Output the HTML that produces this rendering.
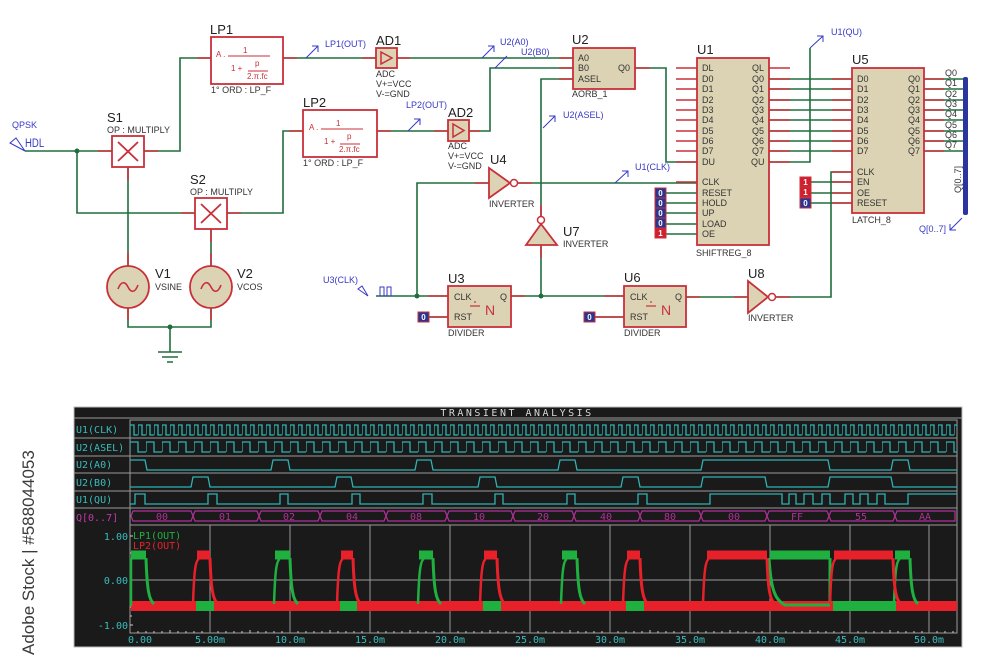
<!DOCTYPE html>
<html><head><meta charset="utf-8"><style>
html,body{margin:0;padding:0;background:#fff;}
svg{display:block;}
.w{stroke:#1f6e3c;stroke-width:1.6;fill:none;}
.r{stroke:#c8303a;stroke-width:1.6;fill:none;}
.bx{fill:#dcd3b4;stroke:#c8303a;stroke-width:1.8;}
.t{font-family:"Liberation Sans",sans-serif;font-size:9px;fill:#333;}
.tl{font-family:"Liberation Sans",sans-serif;font-size:13px;fill:#222;}
.tb{font-family:"Liberation Sans",sans-serif;font-size:9px;fill:#3838c8;}
.tr{font-family:"Liberation Sans",sans-serif;fill:#c8303a;}
.m{font-family:"DejaVu Sans Mono","Liberation Mono",monospace;font-size:10px;}
.cy{fill:#3bbcbc;}
.cyl{stroke:#2fb2b2;stroke-width:1.3;fill:none;}
.gr{stroke:#9a9a9a;stroke-width:1;}
.pg path{stroke:#1fb040;fill:none;}
.pr path{stroke:#e8202a;fill:none;}
</style></head><body>
<svg width="1000" height="671" viewBox="0 0 1000 671" xmlns="http://www.w3.org/2000/svg">
<rect width="1000" height="671" fill="#fff"/>
<text transform="translate(34,655) rotate(-90)" font-family="Liberation Sans,sans-serif" font-size="17" fill="#3a3a3a">Adobe Stock | #588044053</text>

<g class="w">
<path d="M25 151 H112"/>
<path d="M77 151 V213 H195"/>
<path d="M144 151 H180 V58 H211"/>
<path d="M283 58 H376"/>
<path d="M128 167 V266"/>
<path d="M227 213 H283 V131 H303"/>
<path d="M377 131 H448"/>
<path d="M397 58 H573"/>
<path d="M469 131 H490 V68 H573"/>
<path d="M211 229 V266"/>
<path d="M128 308 V327 H211 V308"/>
<path d="M170 327 V352"/>
<path d="M376 296 H448"/>
<path d="M417 296 V183 H489"/>
<path d="M518 183 H697"/>
<path d="M511 296 H624"/>
<path d="M541 296 V245"/>
<path d="M541 216 V79 H573"/>
<path d="M635 68 H666 V162 H697"/>
<path d="M769 79 H852 M769 89 H852 M769 100 H852 M769 110 H852 M769 120 H852 M769 131 H852 M769 141 H852 M769 151 H852"/>
<path d="M769 162 H810 V48"/>
<path d="M924 79 H965 M924 89 H965 M924 100 H965 M924 110 H965 M924 120 H965 M924 131 H965 M924 141 H965 M924 151 H965"/>
<path d="M686 297 H748"/>
<path d="M776 297 H831 V172 H852"/>
<path d="M811 182 H852 M811 193 H852 M811 203 H852"/>
<path d="M595 317 H624"/>
<path d="M429 317 H448"/>
<path d="M666 193 H697 M666 203 H697 M666 213 H697 M666 224 H697 M666 234 H697"/>
</g>
<g class="r">
<path d="M98 151 H112 M144 151 H158 M197 58 H211 M283 58 H297 M362 58 H376 M397 58 H410"/>
<path d="M181 213 H195 M227 213 H241 M289 131 H303 M377 131 H391 M434 131 H448 M469 131 H480"/>
<path d="M128 167 V180 M128 253 V266 M211 229 V242 M211 253 V266 M128 308 V320 M211 308 V320"/>
<path d="M559 58 H573 M559 68 H573 M559 79 H573 M635 68 H650"/>
<path d="M676 68 H697 M676 79 H697 M676 89 H697 M676 100 H697 M676 110 H697 M676 120 H697 M676 131 H697 M676 141 H697 M676 151 H697 M676 162 H697 M676 182 H697"/>
<path d="M769 68 H790 M769 79 H790 M769 89 H790 M769 100 H790 M769 110 H790 M769 120 H790 M769 131 H790 M769 141 H790 M769 151 H790 M769 162 H790"/>
<path d="M832 79 H852 M832 89 H852 M832 100 H852 M832 110 H852 M832 120 H852 M832 131 H852 M832 141 H852 M832 151 H852 M832 172 H852 M832 182 H852 M832 193 H852 M832 203 H852"/>
<path d="M924 79 H944 M924 89 H944 M924 100 H944 M924 110 H944 M924 120 H944 M924 131 H944 M924 141 H944 M924 151 H944"/>
<path d="M475 183 H489 M518 183 H532 M541 245 V258 M541 216 V205"/>
<path d="M428 296 H448 M511 296 H525 M604 296 H624 M686 297 H700 M734 297 H748 M776 297 H790"/>
<path d="M429 317 H448 M595 317 H624"/>
</g>
<g fill="#1f6e3c"><circle cx="77" cy="151" r="2.5"/><circle cx="170" cy="327" r="2.5"/><circle cx="417" cy="296" r="2.5"/><circle cx="541" cy="296" r="2.5"/></g>
<g stroke="#1f6e3c" stroke-width="1.6"><path d="M158 352 H182 M162 357 H178 M167 362 H173"/></g>

<text class="tb" x="12" y="128">QPSK</text>
<path d="M10 143 L16 138 L25 151 Z" fill="none" stroke="#3838c8" stroke-width="1"/>
<text x="25" y="147" font-family="Liberation Sans,sans-serif" font-size="12" fill="#3838c8" transform="scale(0.8,1)" style="transform-origin:25px 147px">HDL</text>

<rect class="bx" x="112" y="136" width="32" height="31" style="fill:#fff"/>
<path d="M118 142 L138 161 M138 142 L118 161" stroke="#c8303a" stroke-width="1.8"/>
<text class="tl" x="107" y="122">S1</text><text class="t" x="107" y="133">OP : MULTIPLY</text>
<rect class="bx" x="195" y="198" width="32" height="31" style="fill:#fff"/>
<path d="M201 204 L221 223 M221 204 L201 223" stroke="#c8303a" stroke-width="1.8"/>
<text class="tl" x="190" y="184">S2</text><text class="t" x="190" y="195">OP : MULTIPLY</text>

<circle cx="128" cy="287" r="21" fill="#dcd3b4" stroke="#c8303a" stroke-width="1.8"/>
<path d="M118 289 C121 281 125 281 128 287 C131 293 135 293 138 285" stroke="#c8303a" stroke-width="1.6" fill="none"/>
<circle cx="211" cy="287" r="21" fill="#dcd3b4" stroke="#c8303a" stroke-width="1.8"/>
<path d="M201 289 C204 281 208 281 211 287 C214 293 218 293 221 285" stroke="#c8303a" stroke-width="1.6" fill="none"/>
<text class="tl" x="155" y="278">V1</text><text class="t" x="155" y="290">VSINE</text>
<text class="tl" x="237" y="278">V2</text><text class="t" x="237" y="290">VCOS</text>

<g>
<rect x="211" y="37" width="72" height="47" fill="#fff" stroke="#c8303a" stroke-width="1.8"/>
<text class="tr" x="216" y="57" font-size="8">A .</text>
<path d="M228 56 H270 M248 71 H268" stroke="#c8303a" stroke-width="1"/>
<text class="tr" x="243" y="53" font-size="8">1</text>
<text class="tr" x="231" y="71" font-size="8">1 +</text>
<text class="tr" x="255" y="66" font-size="8">p</text>
<text class="tr" x="247" y="79" font-size="8">2.π.fc</text>
<text class="tl" x="210" y="34">LP1</text>
<text class="t" x="211" y="93">1° ORD : LP_F</text>
</g>
<g>
<rect x="303" y="110" width="74" height="47" fill="#fff" stroke="#c8303a" stroke-width="1.8"/>
<text class="tr" x="309" y="130" font-size="8">A .</text>
<path d="M321 129 H363 M340 144 H360" stroke="#c8303a" stroke-width="1"/>
<text class="tr" x="336" y="126" font-size="8">1</text>
<text class="tr" x="324" y="144" font-size="8">1 +</text>
<text class="tr" x="347" y="139" font-size="8">p</text>
<text class="tr" x="339" y="152" font-size="8">2.π.fc</text>
<text class="tl" x="303" y="107">LP2</text>
<text class="t" x="303" y="166">1° ORD : LP_F</text>
</g>

<g stroke="#3838c8" stroke-width="1" fill="none">
<path d="M306 58 L318 46 M312 46 H318 V52"/>
<path d="M408 131 L420 119 M414 119 H420 V125"/>
<path d="M482 58 L494 46 M488 46 H494 V52"/>
<path d="M495 68 L507 56"/>
<path d="M543 128 L555 116 M549 116 H555 V122"/>
<path d="M615 183 L628 171 M622 171 H628 V177"/>
<path d="M810 48 L823 36 M817 36 H823 V42"/>
<path d="M950 230 L962 218 M950 224 V230 H956"/>
<path d="M368 296 L362 286 L358 289 Z"/>
</g>
<text class="tb" x="325" y="47">LP1(OUT)</text>
<text class="tb" x="406" y="108">LP2(OUT)</text>
<text class="tb" x="500" y="45">U2(A0)</text>
<text class="tb" x="521" y="55">U2(B0)</text>
<text class="tb" x="563" y="118">U2(ASEL)</text>
<text class="tb" x="635" y="170">U1(CLK)</text>
<text class="tb" x="831" y="35">U1(QU)</text>
<text class="tb" x="919" y="232">Q[0..7]</text>
<text class="tb" x="323" y="283">U3(CLK)</text>
<path d="M377 296 H380 V287 H384 V296 H387 V287 H391 V296 H394" stroke="#3838c8" stroke-width="1" fill="none"/>

<rect class="bx" x="376" y="48" width="21" height="20"/>
<path d="M381 52 L392 58 L381 64 Z" fill="none" stroke="#c8303a" stroke-width="1.5"/>
<text class="tl" x="376" y="45">AD1</text>
<text class="t" x="376" y="77">ADC</text><text class="t" x="376" y="87">V+=VCC</text><text class="t" x="376" y="97">V-=GND</text>
<rect class="bx" x="448" y="120" width="21" height="21"/>
<path d="M453 124 L464 130.5 L453 137 Z" fill="none" stroke="#c8303a" stroke-width="1.5"/>
<text class="tl" x="448" y="117">AD2</text>
<text class="t" x="448" y="149">ADC</text><text class="t" x="448" y="159">V+=VCC</text><text class="t" x="448" y="169">V-=GND</text>

<rect class="bx" x="573" y="48" width="62" height="41"/>
<text class="tl" x="572" y="44">U2</text>
<text class="t" x="578" y="61">A0</text><text class="t" x="578" y="71">B0</text><text class="t" x="578" y="82">ASEL</text><text class="t" x="618" y="71">Q0</text>
<text class="t" x="572" y="97">AORB_1</text>

<path d="M489 168 L510 183 L489 198 Z" class="bx"/><circle cx="514" cy="183" r="3.5" fill="#fff" stroke="#c8303a" stroke-width="1.5"/>
<text class="tl" x="490" y="164">U4</text><text class="t" x="489" y="207">INVERTER</text>
<path d="M526 245 L541 224 L557 245 Z" class="bx"/><circle cx="541" cy="220" r="3.5" fill="#fff" stroke="#c8303a" stroke-width="1.5"/>
<text class="tl" x="563" y="236">U7</text><text class="t" x="563" y="247">INVERTER</text>
<path d="M748 281 L768 297 L748 313 Z" class="bx"/><circle cx="772" cy="297" r="3.5" fill="#fff" stroke="#c8303a" stroke-width="1.5"/>
<text class="tl" x="748" y="278">U8</text><text class="t" x="748" y="321">INVERTER</text>

<rect class="bx" x="448" y="286" width="63" height="41"/>
<text class="tl" x="448" y="283">U3</text>
<text class="t" x="454" y="300">CLK</text><text class="t" x="454" y="320">RST</text><text class="t" x="500" y="300">Q</text>
<text class="tr" x="485" y="315" font-size="14">N</text><path d="M470 306 H480" stroke="#c8303a" stroke-width="1.2"/><circle cx="475" cy="302" r="0.9" fill="#c8303a"/>
<text class="t" x="448" y="336">DIVIDER</text>
<rect class="bx" x="624" y="286" width="62" height="41"/>
<text class="tl" x="624" y="282">U6</text>
<text class="t" x="630" y="300">CLK</text><text class="t" x="630" y="320">RST</text><text class="t" x="675" y="300">Q</text>
<text class="tr" x="661" y="315" font-size="14">N</text><path d="M646 306 H656" stroke="#c8303a" stroke-width="1.2"/><circle cx="651" cy="302" r="0.9" fill="#c8303a"/>
<text class="t" x="624" y="336">DIVIDER</text>

<rect class="bx" x="697" y="58" width="72" height="187"/>
<text class="tl" x="697" y="54">U1</text>
<g class="t">
<text x="702" y="71">DL</text><text x="702" y="82">D0</text><text x="702" y="92">D1</text><text x="702" y="103">D2</text><text x="702" y="113">D3</text><text x="702" y="123">D4</text><text x="702" y="134">D5</text><text x="702" y="144">D6</text><text x="702" y="154">D7</text><text x="702" y="165">DU</text>
<text x="702" y="185">CLK</text><text x="702" y="196">RESET</text><text x="702" y="206">HOLD</text><text x="702" y="216">UP</text><text x="702" y="227">LOAD</text><text x="702" y="237">OE</text>
<text x="752" y="71">QL</text><text x="752" y="82">Q0</text><text x="752" y="92">Q1</text><text x="752" y="103">Q2</text><text x="752" y="113">Q3</text><text x="752" y="123">Q4</text><text x="752" y="134">Q5</text><text x="752" y="144">Q6</text><text x="752" y="154">Q7</text><text x="751" y="165">QU</text>
<text x="696" y="256">SHIFTREG_8</text>
</g>
<rect class="bx" x="852" y="68" width="72" height="145"/>
<text class="tl" x="852" y="64">U5</text>
<g class="t">
<text x="857" y="82">D0</text><text x="857" y="92">D1</text><text x="857" y="103">D2</text><text x="857" y="113">D3</text><text x="857" y="123">D4</text><text x="857" y="134">D5</text><text x="857" y="144">D6</text><text x="857" y="154">D7</text>
<text x="857" y="175">CLK</text><text x="857" y="185">EN</text><text x="857" y="196">OE</text><text x="857" y="206">RESET</text>
<text x="908" y="82">Q0</text><text x="908" y="92">Q1</text><text x="908" y="103">Q2</text><text x="908" y="113">Q3</text><text x="908" y="123">Q4</text><text x="908" y="134">Q5</text><text x="908" y="144">Q6</text><text x="908" y="154">Q7</text>
<text x="852" y="223">LATCH_8</text>
<text x="945" y="76">Q0</text><text x="945" y="86">Q1</text><text x="945" y="97">Q2</text><text x="945" y="107">Q3</text><text x="945" y="117">Q4</text><text x="945" y="128">Q5</text><text x="945" y="138">Q6</text><text x="945" y="148">Q7</text>
<text transform="translate(961,193) rotate(-90)">Q[0..7]</text>
</g>
<rect x="963" y="77" width="5" height="138" rx="2" fill="#2a35a0"/>

<g font-family="Liberation Sans,sans-serif" font-size="8" font-weight="bold" fill="#fff" text-anchor="middle">
<rect x="655" y="188" width="11" height="10" fill="#2a3590" stroke="#c8303a"/><text x="660.5" y="196">0</text>
<rect x="655" y="198" width="11" height="10" fill="#2a3590" stroke="#c8303a"/><text x="660.5" y="206">0</text>
<rect x="655" y="208" width="11" height="10" fill="#2a3590" stroke="#c8303a"/><text x="660.5" y="216">0</text>
<rect x="655" y="218" width="11" height="10" fill="#2a3590" stroke="#c8303a"/><text x="660.5" y="226">0</text>
<rect x="655" y="228" width="11" height="10" fill="#d02030" stroke="#c8303a"/><text x="660.5" y="236">1</text>
<rect x="800" y="177" width="11" height="10" fill="#d02030" stroke="#c8303a"/><text x="805.5" y="185">1</text>
<rect x="800" y="187" width="11" height="10" fill="#d02030" stroke="#c8303a"/><text x="805.5" y="195">1</text>
<rect x="800" y="198" width="11" height="10" fill="#2a3590" stroke="#c8303a"/><text x="805.5" y="206">0</text>
<rect x="418" y="312" width="11" height="10" fill="#2a3590" stroke="#c8303a"/><text x="423.5" y="320">0</text>
<rect x="584" y="312" width="11" height="10" fill="#2a3590" stroke="#c8303a"/><text x="589.5" y="320">0</text>
</g>

<defs>
<pattern id="clk" x="130" y="0" width="8" height="671" patternUnits="userSpaceOnUse">
<path d="M0 435 V425 H4 V435 H8" stroke="#2fb2b2" stroke-width="1.3" fill="none"/>
</pattern>
<pattern id="asel" x="130" y="0" width="16" height="671" patternUnits="userSpaceOnUse">
<path d="M0 452 V442 H8 V452 H16" stroke="#2fb2b2" stroke-width="1.3" fill="none"/>
</pattern>
</defs>
<rect x="74" y="407" width="888" height="240" fill="#1a1a1a" stroke="#bbb" stroke-width="1"/>
<line x1="74" y1="418" x2="962" y2="418" class="gr"/>
<text x="517" y="416" text-anchor="middle" class="m" fill="#d8d8d8" letter-spacing="2.5" font-size="10">TRANSIENT ANALYSIS</text>
<rect x="130" y="420" width="827" height="213" fill="none" stroke="#9a9a9a"/>
<g class="gr">
<line x1="74" y1="438" x2="957" y2="438"/><line x1="74" y1="456" x2="957" y2="456"/><line x1="74" y1="473" x2="957" y2="473"/><line x1="74" y1="491" x2="957" y2="491"/><line x1="74" y1="508" x2="957" y2="508"/><line x1="130" y1="525" x2="957" y2="525"/>
<line x1="130" y1="580" x2="957" y2="580"/>
<line x1="210" y1="525" x2="210" y2="633"/><line x1="290" y1="525" x2="290" y2="633"/><line x1="370" y1="525" x2="370" y2="633"/><line x1="450" y1="525" x2="450" y2="633"/><line x1="530" y1="525" x2="530" y2="633"/><line x1="610" y1="525" x2="610" y2="633"/><line x1="690" y1="525" x2="690" y2="633"/><line x1="770" y1="525" x2="770" y2="633"/><line x1="850" y1="525" x2="850" y2="633"/><line x1="929" y1="525" x2="929" y2="633"/>
</g>
<path d="M138 633v-2M146 633v-2M154 633v-2M162 633v-2M170 633v-3M178 633v-2M186 633v-2M194 633v-2M202 633v-2M218 633v-2M226 633v-2M234 633v-2M242 633v-2M250 633v-3M258 633v-2M266 633v-2M274 633v-2M282 633v-2M298 633v-2M306 633v-2M314 633v-2M322 633v-2M330 633v-3M338 633v-2M346 633v-2M354 633v-2M362 633v-2M378 633v-2M386 633v-2M394 633v-2M402 633v-2M410 633v-3M418 633v-2M426 633v-2M434 633v-2M442 633v-2M458 633v-2M466 633v-2M474 633v-2M482 633v-2M490 633v-3M498 633v-2M506 633v-2M514 633v-2M522 633v-2M538 633v-2M546 633v-2M554 633v-2M562 633v-2M570 633v-3M578 633v-2M586 633v-2M594 633v-2M602 633v-2M618 633v-2M626 633v-2M634 633v-2M642 633v-2M650 633v-3M658 633v-2M666 633v-2M674 633v-2M682 633v-2M698 633v-2M706 633v-2M714 633v-2M722 633v-2M730 633v-3M738 633v-2M746 633v-2M754 633v-2M762 633v-2M778 633v-2M786 633v-2M794 633v-2M802 633v-2M810 633v-3M818 633v-2M826 633v-2M834 633v-2M842 633v-2M858 633v-2M866 633v-2M874 633v-2M882 633v-2M890 633v-3M898 633v-2M906 633v-2M914 633v-2M922 633v-2M937 633v-2M945 633v-2M953 633v-2" stroke="#ccc"/>
<path d="M130 536h3M130 553h2M130 562h2M130 571h2M130 589h2M130 598h2M130 607h2M130 616h2M130 625h3" stroke="#ccc"/>
<g class="m cy">
<text x="76" y="433">U1(CLK)</text><text x="76" y="451">U2(ASEL)</text><text x="76" y="468">U2(A0)</text><text x="76" y="486">U2(B0)</text><text x="76" y="503">U1(QU)</text>
<text x="128" y="540" text-anchor="end">1.00</text><text x="128" y="584" text-anchor="end">0.00</text><text x="128" y="629" text-anchor="end">-1.00</text>
<text x="130" y="643" text-anchor="middle" dx="10">0.00</text><text x="210" y="643" text-anchor="middle">5.00m</text><text x="290" y="643" text-anchor="middle">10.0m</text><text x="370" y="643" text-anchor="middle">15.0m</text><text x="450" y="643" text-anchor="middle">20.0m</text><text x="530" y="643" text-anchor="middle">25.0m</text><text x="610" y="643" text-anchor="middle">30.0m</text><text x="690" y="643" text-anchor="middle">35.0m</text><text x="770" y="643" text-anchor="middle">40.0m</text><text x="850" y="643" text-anchor="middle">45.0m</text><text x="929" y="643" text-anchor="middle">50.0m</text>
</g>
<text x="76" y="521" class="m" fill="#c03aa8">Q[0..7]</text>
<rect x="130" y="420" width="827" height="18" fill="url(#clk)"/>
<rect x="130" y="438" width="827" height="18" fill="url(#asel)"/>
<path class="cyl" d="M130 460 H145 L147 470 H271 L273 460 H288 L290 470 H415 L417 460 H431 L433 470 H558 L560 460 H575 L577 470 H701 L703 460 H828 L830 470 H891 L893 460 H908 L910 470 H957"/>
<path class="cyl" d="M130 487 H191 L193 477 H208 L210 487 H335 L337 477 H351 L353 487 H478 L480 477 H495 L497 487 H621 L623 477 H638 L640 487 H701 L703 477 H765 L767 487 H828 L830 477 H891 L893 487 H957"/>
<path class="cyl" d="M130 504 H135 V494 H145 V504 H208 V494 H217 V504 H280 V494 H288 V504 H352 V494 H360 V504 H423 V494 H432 V504 H495 V494 H503 V504 H567 V494 H575 V504 H638 V494 H647 V504 H710 V494 H782 V504 H789 V494 H796 V504 H804 V494 H813 V504 H822 V494 H830 V504 H845 V494 H853 V504 H860 V494 H868 V504 H877 V494 H885 V504 H908 V494 H957"/>
<g stroke="#b0309a" stroke-width="1.2" fill="none">
<path d="M131 516 L133 511 H191 L195 521 H257 L259 516 L257 511 H195 L191 521 H133 Z"/>
<path d="M259 516 L261 511 H318 L322 521 H384 L386 516 L384 511 H322 L318 521 H261 Z"/>
<path d="M386 516 L388 511 H445 L449 521 H511 L513 516 L511 511 H449 L445 521 H388 Z"/>
<path d="M513 516 L515 511 H572 L576 521 H638 L640 516 L638 511 H576 L572 521 H515 Z"/>
<path d="M640 516 L642 511 H699 L703 521 H765 L767 516 L765 511 H703 L699 521 H642 Z"/>
<path d="M767 516 L769 511 H827 L831 521 H893 L895 516 L893 511 H831 L827 521 H769 Z"/>
<path d="M895 516 L897 511 H955 V521 H897 Z"/>
</g>
<g class="m" fill="#b0309a" text-anchor="middle">
<text x="162" y="520">00</text><text x="225" y="520">01</text><text x="289" y="520">02</text><text x="352" y="520">04</text><text x="416" y="520">08</text><text x="479" y="520">10</text><text x="543" y="520">20</text><text x="606" y="520">40</text><text x="670" y="520">80</text><text x="734" y="520">00</text><text x="797" y="520">FF</text><text x="861" y="520">55</text><text x="925" y="520">AA</text>
</g>
<!-- analog: low bands -->
<rect x="131" y="601" width="826" height="10" fill="#e8202a"/>
<g fill="#1fb040">
<rect x="196" y="601" width="18" height="10"/><rect x="340" y="601" width="17" height="10"/><rect x="483" y="601" width="18" height="10"/><rect x="626" y="601" width="18" height="10"/><rect x="833" y="601" width="63" height="10"/>
</g>
<!-- green pulses -->
<g class="pg">
<path d="M131 555 H146" stroke-width="9"/>
<path d="M275 555 H290" stroke-width="9"/>
<path d="M419 555 H433" stroke-width="9"/>
<path d="M562 555 H577" stroke-width="9"/>
<path d="M770 555 H830" stroke-width="9"/>
<path d="M895 555 H910" stroke-width="9"/>
<path stroke-width="2.5" d="M131 606 V558 M274 604 C275 575 276 560 280 559 M418 604 C419 575 420 560 424 559 M561 604 C562 575 563 560 567 559 M894 604 C895 575 896 560 900 559"/>
<path stroke-width="3" d="M146 558 C147 590 149 600 154 604 M290 558 C291 590 293 600 298 604 M433 558 C434 590 436 600 441 604 M577 558 C578 590 580 600 585 604 M910 558 C911 590 913 600 918 604 M830 558 V604"/>
<path stroke-width="3" d="M769 558 C771 590 775 600 785 605 H830"/>
</g>
<g class="pr">
<path d="M197 555 H210" stroke-width="9"/>
<path d="M341 555 H353" stroke-width="9"/>
<path d="M484 555 H497" stroke-width="9"/>
<path d="M627 555 H640" stroke-width="9"/>
<path d="M707 555 H767" stroke-width="9"/>
<path d="M834 555 H893" stroke-width="9"/>
<path stroke-width="2.5" d="M193 604 C194 575 195 560 199 559 M337 604 C338 575 339 560 343 559 M480 604 C481 575 482 560 486 559 M623 604 C624 575 625 560 629 559 M703 604 C704 575 705 560 709 559 M830 604 C831 575 832 560 836 559"/>
<path stroke-width="3" d="M210 558 C211 590 213 600 218 604 M353 558 C354 590 356 600 361 604 M497 558 C498 590 500 600 505 604 M640 558 C641 590 643 600 648 604 M767 558 C768 590 770 600 775 604 M893 558 C894 590 896 600 901 604"/>
</g>
<text x="133" y="539" class="m" fill="#1fb040">LP1(OUT)</text>
<text x="133" y="549" class="m" fill="#e8202a">LP2(OUT)</text>
</svg>
</body></html>
